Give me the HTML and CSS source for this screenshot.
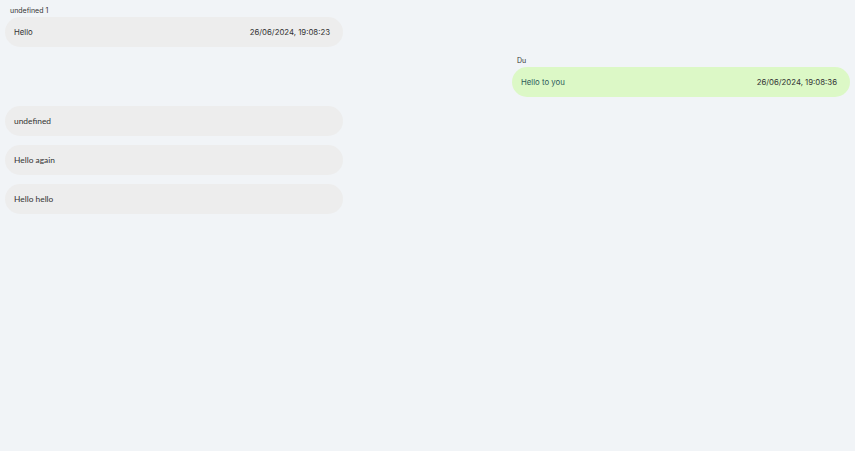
FILE: index.html
```html
<!DOCTYPE html>
<html lang="en">
<head>
    <meta charset="UTF-8" />
    <meta name="viewport" content="width=device-width, initial-scale=1.0"/>
    <title>Chat</title>
    <link rel="stylesheet" href="styles.css">
</head>
<body>
    <div class="chat">
        <div class="msg">
            <p class="name">undefined 1</p>
            <div class="bubble">
                <p class="text">Hello</p>
                <p class="time">26/06/2024, 19:08:23</p>
            </div>
        </div>
        <div class="msg own">
            <p class="name">Du</p>
            <div class="bubble">
                <p class="text">Hello to you</p>
                <p class="time">26/06/2024, 19:08:36</p>
            </div>
        </div>
        <div class="msg plain">
            <div class="bubble">
                <p class="text">undefined</p>
            </div>
        </div>
        <div class="msg plain">
            <div class="bubble">
                <p class="text">Hello again</p>
            </div>
        </div>
        <div class="msg plain">
            <div class="bubble">
                <p class="text">Hello hello</p>
            </div>
        </div>
    </div>
</body>
</html>
```

FILE: styles.css
```css
html,
body {
    margin: 0;
    width: 100%;
    height: 100%;
    background: #f1f4f7;
    color: #333;
    font-family: "Inter", "Noto Sans", sans-serif;
}
p {
    margin: 0;
}
.chat {
    display: flex;
    flex-direction: column;
    gap: 9px;
    padding: 6px 5px 5px;
}
.msg {
    display: flex;
    flex-direction: column;
    width: 40%;
}
.msg.own {
    align-self: flex-end;
}
.name {
    font-size: 7px;
    line-height: 10px;
    padding-left: 5px;
    margin-bottom: 1px;
    color: #333;
}
.bubble {
    display: flex;
    align-items: center;
    justify-content: space-between;
    height: 30px;
    padding: 0 13px 0 9px;
    border-radius: 15px;
    background: #ededed;
    font-size: 7.8px;
}
.own .bubble {
    background: #dcf8c6;
}
.own .text {
    color: #2d5a5a;
}
.plain .bubble {
    font-family: "Lato", sans-serif;
    font-size: 8.4px;
}
```
